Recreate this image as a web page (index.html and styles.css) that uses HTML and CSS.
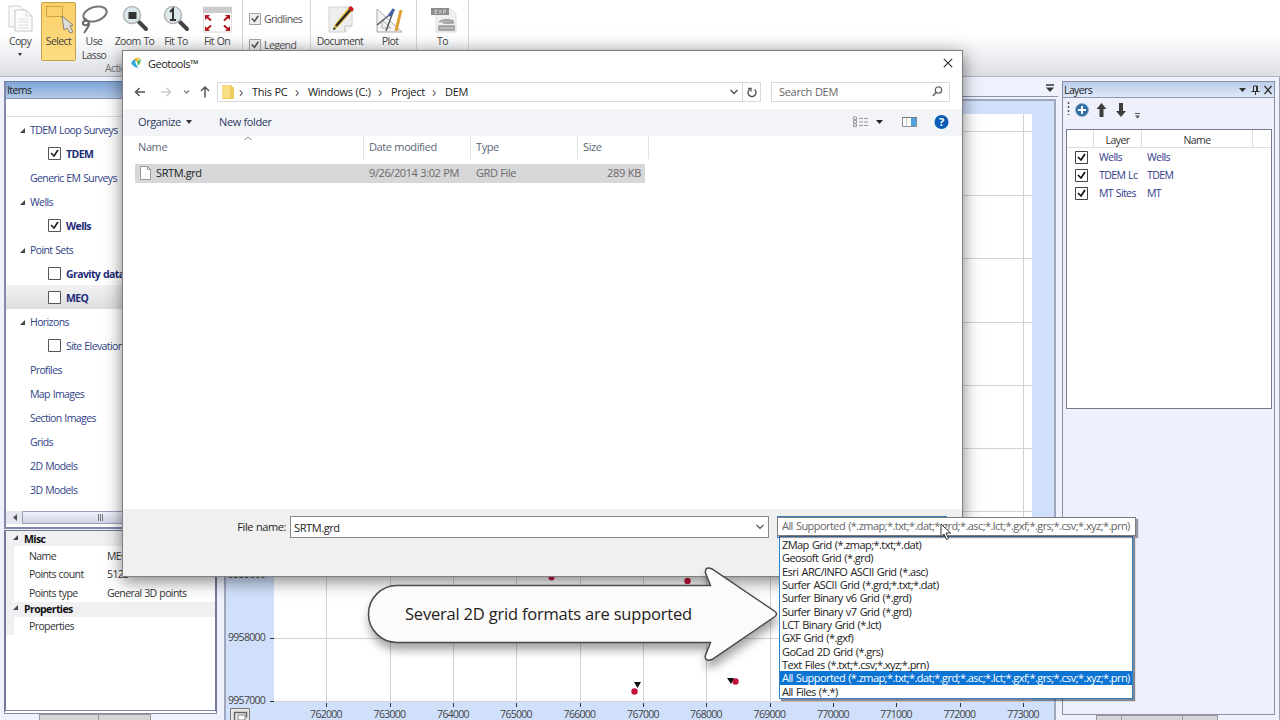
FILE: index.html
```html
<!DOCTYPE html>
<html lang="en">
<head>
  <meta charset="UTF-8">
  <meta name="viewport" content="width=device-width, initial-scale=1.0">
  <title>Geotools</title>
  <link rel="stylesheet" href="styles.css">
</head>
<body>
  <div class="app">
    <div class="ribbon">
      <div class="tool copy">
        <svg width="30" height="32" viewBox="0 0 30 32"><path d="M4 4h11l5 5v16H4z" fill="#fafafa" stroke="#d0d0d0"/><path d="M10 8h11l6 6v15H10z" fill="#fdfdfd" stroke="#c6c6c6"/><path d="M21 8v6h6M13 17h11M13 20h11M13 23h11M13 26h11" fill="none" stroke="#dadada"/></svg>
        <span>Copy</span><i class="caret"></i>
      </div>
      <div class="tool select">
        <svg width="30" height="32" viewBox="0 0 30 32"><path d="M2.500 3.500h16v10h-16z" fill="none" stroke="#b8912f" stroke-dasharray="2 1"/><path d="M18 13l2 14 3-2 3 5 3-1-3-6 3-1z" fill="#ddd" stroke="#8a826c"/></svg>
        <span>Select</span>
      </div>
      <div class="tool lasso">
        <svg width="30" height="32" viewBox="0 0 30 32"><ellipse cx="16" cy="12" rx="12" ry="7" transform="rotate(-17 16 12)" fill="none" stroke="#777" stroke-width="2"/><path d="M5 16q6 4 5 7-2 4-5 8M10 19q-7-1-6 3 3 3 6-1" fill="none" stroke="#6d6d6d" stroke-width="2"/></svg>
        <span>Use<br>Lasso</span>
      </div>
      <div class="tool zoomto">
        <svg width="30" height="32" viewBox="0 0 30 32"><path d="M19 20l7 7" stroke="#444" stroke-width="4" stroke-linecap="round"/><circle cx="12" cy="13" r="8.500" fill="#dce9ec" stroke="#b5b5b5" stroke-width="1.500"/><path d="M8.500 10h8v7h-8z" fill="#333"/></svg>
        <span>Zoom To</span>
      </div>
      <div class="tool fitto">
        <svg width="30" height="32" viewBox="0 0 30 32"><path d="M19 20l7 7" stroke="#444" stroke-width="4" stroke-linecap="round"/><circle cx="12" cy="13" r="8.500" fill="#dce9ec" stroke="#b5b5b5" stroke-width="1.500"/><path d="M9 10l3-3v11M9 18h6" fill="none" stroke="#333" stroke-width="2"/></svg>
        <span>Fit To</span>
      </div>
      <div class="tool fiton">
        <svg width="30" height="32" viewBox="0 0 30 32"><path d="M1.500 5h28v25h-28z" fill="#fff" stroke="#ddd"/><path d="M1 5h29v6H1z" fill="#ccc"/><path d="M4 14l5 4.500M27 14l-5 4.500M4 28l5-4.500M27 28l-5-4.500" stroke="#b3161c" stroke-width="2"/><path d="M3 13h5l-5 5zM28 13h-5l5 5zM3 29h5l-5-5zM28 29h-5l5-5z" fill="#b3161c"/></svg>
        <span>Fit On</span>
      </div>
      <div class="checks">
        <label><svg class="cb" viewBox="0 0 13 13"><path d="M.5.5h12v12H.5z" fill="#eee" stroke="#999"/><path d="M3 6l3 3 4-6" fill="none" stroke="#555" stroke-width="1.700"/></svg>Gridlines</label>
        <label><svg class="cb" viewBox="0 0 13 13"><path d="M.5.5h12v12H.5z" fill="#eee" stroke="#999"/><path d="M3 6l3 3 4-6" fill="none" stroke="#555" stroke-width="1.700"/></svg>Legend</label>
      </div>
      <div class="tool document">
        <svg width="30" height="32" viewBox="0 0 30 32"><path d="M4 5h23v19l-7 6H4z" fill="#eee" stroke="#d2d2d2"/><path d="M20 30v-6h7" fill="#fafafa" stroke="#bbb"/><path d="M8 28l2-6L24 5l4 3-15 17z" fill="#e4c13e"/><path d="M11 24L26 7" stroke="#2c2a22" stroke-width="2.500"/><path d="M23 6l3-2 3 3-2 3z" fill="#c8202a"/><path d="M8 28l1-3 2 2z" fill="#222"/></svg>
        <span>Document</span>
      </div>
      <div class="tool plot">
        <svg width="30" height="32" viewBox="0 0 30 32"><path d="M2 7v23h25zM7 18v8h9z" fill="#f4f4f4" stroke="#aaa"/><path d="M18 10L2 23M18 10L11 29" stroke="#555b66" stroke-width="1.500"/><path d="M14 14l5-7" stroke="#3f5fa8" stroke-width="3"/><path d="M26 8l-5 21" stroke="#dfa033" stroke-width="3"/></svg>
        <span>Plot</span>
      </div>
      <div class="tool to">
        <svg width="30" height="32" viewBox="0 0 30 32"><path d="M8 7h15l5 5v18H8z" fill="#f0f0f0" stroke="#ddd"/><path d="M3 6h18v7H3z" fill="#8c8c8c"/><path d="M9.500 8H7v3.500h2.500M7 9.700h2M11 8l2.500 3.500M13.500 8L11 11.500M15.500 12V8h2v2h-2" fill="none" stroke="#d5d5d5" stroke-width=".8"/><path d="M11 20q4-4 14-1v2H15M11 24h15v4H11z" fill="#bbb" stroke="#999" stroke-width="1.500"/></svg>
        <span>To</span>
      </div>
      <span class="group-name">Actions</span>
    </div>

    <div class="workspace">
      <div class="left">
        <div class="items">
          <div class="panel-head">Items</div>
          <ul class="tree">
            <li class="open">TDEM Loop Surveys</li>
            <li class="leaf bold"><svg class="cb" viewBox="0 0 13 13"><path d="M.5.5h12v12H.5z" fill="#fff" stroke="#555"/><path d="M3 6l3 3 4-6" fill="none" stroke="#222" stroke-width="1.700"/></svg>TDEM</li>
            <li>Generic EM Surveys</li>
            <li class="open">Wells</li>
            <li class="leaf bold"><svg class="cb" viewBox="0 0 13 13"><path d="M.5.5h12v12H.5z" fill="#fff" stroke="#555"/><path d="M3 6l3 3 4-6" fill="none" stroke="#222" stroke-width="1.700"/></svg>Wells</li>
            <li class="open">Point Sets</li>
            <li class="leaf bold"><svg class="cb" viewBox="0 0 13 13"><path d="M.5.5h12v12H.5z" fill="#fff" stroke="#555"/></svg>Gravity data</li>
            <li class="leaf bold current"><svg class="cb" viewBox="0 0 13 13"><path d="M.5.5h12v12H.5z" fill="#fff" stroke="#555"/></svg>MEQ</li>
            <li class="open">Horizons</li>
            <li class="leaf"><svg class="cb" viewBox="0 0 13 13"><path d="M.5.5h12v12H.5z" fill="#fff" stroke="#555"/></svg>Site Elevations</li>
            <li>Profiles</li>
            <li>Map Images</li>
            <li>Section Images</li>
            <li>Grids</li>
            <li>2D Models</li>
            <li>3D Models</li>
          </ul>
          <div class="scrollbar"><svg width="16" height="13" viewBox="0 0 16 13"><path d="M11 3v7L7 6.500z" fill="#555"/></svg><div class="thumb"><i></i><i></i><i></i></div></div>
        </div>
        <div class="props">
          <div class="props-head">Misc</div>
          <div class="prop"><span>Name</span><span>MEQ</span></div>
          <div class="prop"><span>Points count</span><span>5123</span></div>
          <div class="prop"><span>Points type</span><span>General 3D points</span></div>
          <div class="props-head">Properties</div>
          <div class="prop"><span>Properties</span></div>
        </div>
        <div class="tabs"><i></i><i></i></div>
      </div>

      <div class="center">
        <div class="doc-tabs"><svg width="10" height="8" viewBox="0 0 10 8"><path d="M1 1h8" stroke="#333" stroke-width="1.500"/><path d="M1 3.500h8L5 8z" fill="#333"/></svg></div>
        <div class="doc">
          <svg class="map" viewBox="226 101 829 619" width="829" height="619">
            <rect x="274" y="114" width="758" height="587" fill="#fff"/>
            <path class="grid" d="M326.500 114v587M390.500 114v587M453.500 114v587M516.500 114v587M580.500 114v587M643.500 114v587M706.500 114v587M770.500 114v587M833.500 114v587M896.500 114v587M960.500 114v587M1023.500 114v587M274 131.500h758M274 195.500h758M274 258.500h758M274 322.500h758M274 385.500h758M274 448.500h758M274 511.500h758M274 574.500h758M274 638.500h758M274 701.500h758"/>
            <path class="tick" d="M326.500 703v4M390.500 703v4M453.500 703v4M516.500 703v4M580.500 703v4M643.500 703v4M706.500 703v4M770.500 703v4M833.500 703v4M896.500 703v4M960.500 703v4M1023.500 703v4M270 574.500h4M270 638.500h4M270 701.500h4"/>
            <g class="axis">
              <text x="228" y="578">9959000</text>
              <text x="228" y="641">9958000</text>
              <text x="228" y="704">9957000</text>
            </g>
            <g class="axis mid">
              <text x="326" y="718">762000</text>
              <text x="389.500" y="718">763000</text>
              <text x="453" y="718">764000</text>
              <text x="516" y="718">765000</text>
              <text x="579.500" y="718">766000</text>
              <text x="643" y="718">767000</text>
              <text x="706" y="718">768000</text>
              <text x="769.500" y="718">769000</text>
              <text x="833" y="718">770000</text>
              <text x="896" y="718">771000</text>
              <text x="959.500" y="718">772000</text>
              <text x="1023" y="718">773000</text>
            </g>
            <g fill="#c4123f"><circle cx="551.500" cy="577.500" r="3"/><circle cx="687.500" cy="581" r="3.200"/><circle cx="634.500" cy="691.500" r="3.200"/><circle cx="735.500" cy="681.500" r="3.200"/></g>
            <path d="M634 682h7l-3.500 6zM727 678h7l-3 6z" fill="#111"/>
            <path d="M230.500 708.500h19v14h-19z" fill="#e8e8e8" stroke="#777"/><path d="M234.500 720v-7.500h12v5" fill="none" stroke="#666" stroke-width="1.500"/><path d="M238 715h7v5h-7z" fill="#fff" stroke="#888"/>
          </svg>
        </div>
      </div>

      <div class="right">
        <div class="layers">
          <div class="panel-head light"><span>Layers</span>
            <svg width="34" height="12" viewBox="0 0 34 12"><path d="M1 4h7L4.500 8z" fill="#333"/><path d="M15.500 7V2h4v5M13.500 7.500h8M17.500 8v3M18.500 2v5" fill="none" stroke="#333"/><path d="M26.500 2l7 8M33.500 2l-7 8" stroke="#333" stroke-width="1.300"/></svg>
          </div>
          <div class="layer-tools">
            <svg width="74" height="22" viewBox="0 0 74 22"><path d="M2.500 3v13" stroke="#555" stroke-width="1.500" stroke-dasharray="2 2"/><circle cx="16" cy="11" r="6.500" fill="#2f6ea5" stroke="#8fb2cf"/><path d="M16 7v8M12 11h8" stroke="#fff" stroke-width="2"/><path d="M35.500 4l5 6h-3v8h-4v-8h-3zM55 18l5-6h-3V4h-4v8h-3z" fill="#3f3f3f"/><path d="M69 14.500h5" stroke="#555"/><path d="M69 16.500h5l-2.500 3z" fill="#555"/></svg>
          </div>
          <div class="layer-table">
            <div class="lrow lhead"><span></span><span>Layer</span><span>Name</span><span></span></div>
            <div class="lrow"><svg class="cb" viewBox="0 0 13 13"><path d="M.5.5h12v12H.5z" fill="#fff" stroke="#444"/><path d="M3 6l3 3 4-6" fill="none" stroke="#111" stroke-width="1.700"/></svg><span>Wells</span><span>Wells</span></div>
            <div class="lrow"><svg class="cb" viewBox="0 0 13 13"><path d="M.5.5h12v12H.5z" fill="#fff" stroke="#444"/><path d="M3 6l3 3 4-6" fill="none" stroke="#111" stroke-width="1.700"/></svg><span>TDEM Lc</span><span>TDEM</span></div>
            <div class="lrow"><svg class="cb" viewBox="0 0 13 13"><path d="M.5.5h12v12H.5z" fill="#fff" stroke="#444"/><path d="M3 6l3 3 4-6" fill="none" stroke="#111" stroke-width="1.700"/></svg><span>MT Sites</span><span>MT</span></div>
          </div>
        </div>
        <div class="tabs right-tabs"><i></i><i></i><i></i></div>
      </div>
    </div>
  </div>

  <div class="dialog">
    <div class="title">
      <svg width="14" height="14" viewBox="0 0 14 14"><path d="M1 7q3-5 8-5L5 6l3 6Q3 11 1 7z" fill="#35a6d8"/><path d="M4 3q3-2 7-1-4 1-4 4z" fill="#f0b429"/><path d="M7 5l4-2q0 4-3 7z" fill="#5fb75a"/></svg>
      <span>Geotools™</span>
      <svg class="close" width="10" height="10" viewBox="0 0 10 10"><path d="M.8.800l8.400 8.400M9.200.800L.8 9.200" stroke="#333" stroke-width="1.200"/></svg>
    </div>
    <div class="nav">
      <svg width="76" height="14" viewBox="0 0 76 14" fill="none" stroke-width="1.500"><path d="M11 7H1.500M5.500 3l-4 4 4 4" stroke="#555"/><path d="M27 7h9.500M32.500 3l4 4-4 4" stroke="#ccc"/><path d="M50 5.500l2.500 2.500L55 5.500" stroke="#888"/><path d="M71 12.500V2M67 6l4-4 4 4" stroke="#555"/></svg>
      <div class="path">
        <svg width="12" height="14" viewBox="0 0 12 14"><path d="M0 0h10v1.500l2 1V14H0z" fill="#eecb5f"/><path d="M0 0h8v13H0z" fill="#f9dd82"/></svg>
        <b>›</b><span class="c1">This PC</span><b>›</b><span class="c2">Windows (C:)</span><b>›</b><span class="c3">Project</span><b>›</b><span>DEM</span>
        <svg class="down" width="10" height="8" viewBox="0 0 10 8"><path d="M1.500 2L5 5.500 8.500 2" fill="none" stroke="#555" stroke-width="1.500"/></svg>
        <div class="refresh"><svg width="11" height="12" viewBox="0 0 11 12"><path d="M8.500 3.500a4 4 0 1 1-5 0M2 2.500h3v3" fill="none" stroke="#555" stroke-width="1.400"/></svg></div>
      </div>
      <div class="search"><span>Search DEM</span><svg width="11" height="11" viewBox="0 0 11 11"><circle cx="6.500" cy="4" r="3.200" fill="none" stroke="#666" stroke-width="1.300"/><path d="M4.300 6.300L.8 10" stroke="#666" stroke-width="1.600"/></svg></div>
    </div>
    <div class="toolbar">
      <span class="organize">Organize</span><i class="caret"></i><span class="newfolder">New folder</span>
      <svg width="98" height="16" viewBox="0 0 98 16"><path d="M1.500 3h3v2.500h-3zM1.500 6.500h3V9h-3zM1.500 10h3v2.500h-3z" fill="none" stroke="#999"/><path d="M7 4.500h9M7 8h9M7 11.500h9" stroke="#999" stroke-dasharray="4 1"/><path d="M24 6h7l-3.500 4z" fill="#223"/><path d="M50.500 3.500h14v9h-14z" fill="#fff" stroke="#8a8f99"/><path d="M59 4h5v8h-5z" fill="#4da3e0"/><path d="M54.500 4v8" stroke="#ccc"/><path d="M50 3.500h15" stroke="#777"/><circle cx="89.500" cy="8" r="7" fill="#0b5cb5"/><text x="89.500" y="12" class="help">?</text></svg>
    </div>
    <div class="list">
      <svg class="sort" width="8" height="5" viewBox="0 0 8 5"><path d="M.5 4L4 1l3.500 3" fill="none" stroke="#888"/></svg>
      <div class="lh"><span>Name</span><span>Date modified</span><span>Type</span><span>Size</span></div>
      <div class="file">
        <span><svg width="11" height="14" viewBox="0 0 11 14"><path d="M.5.500h7l3 3v10H.5z" fill="#fff" stroke="#999"/><path d="M7.500.500v3h3" fill="none" stroke="#999"/></svg>SRTM.grd</span>
        <span>9/26/2014 3:02 PM</span><span>GRD File</span><span>289 KB</span>
      </div>
    </div>
    <div class="footer">
      <span>File name:</span>
      <div class="filename">SRTM.grd<svg width="10" height="8" viewBox="0 0 10 8"><path d="M1.500 2L5 5.500 8.500 2" fill="none" stroke="#555" stroke-width="1.200"/></svg></div>
      <div class="combo"></div>
    </div>
  </div>

  <svg class="callout" width="430" height="120" viewBox="360 556 430 120">
    <path d="M397 585.500H710.500L705.500 573Q704.500 566 712 569L775 611.500Q778 614 775 616.500L712 659.500Q704 662 705.500 655L710.500 642.500H397A28.500 28.500 0 0 1 397 585.500Z" fill="#fdfafa" stroke="#4a4a4a" stroke-width="1.500"/>
    <text x="405" y="620">Several 2D grid formats are supported</text>
  </svg>

  <div class="formats">
    <div>ZMap Grid (*.zmap;*.txt;*.dat)</div>
    <div>Geosoft Grid (*.grd)</div>
    <div>Esri ARC/INFO ASCII Grid (*.asc)</div>
    <div>Surfer ASCII Grid (*.grd;*.txt;*.dat)</div>
    <div>Surfer Binary v6 Grid (*.grd)</div>
    <div>Surfer Binary v7 Grid (*.grd)</div>
    <div>LCT Binary Grid (*.lct)</div>
    <div>GXF Grid (*.gxf)</div>
    <div>GoCad 2D Grid (*.grs)</div>
    <div>Text Files (*.txt;*.csv;*.xyz;*.prn)</div>
    <div class="on">All Supported (*.zmap;*.txt;*.dat;*.grd;*.asc;*.lct;*.gxf;*.grs;*.csv;*.xyz;*.prn)</div>
    <div>All Files (*.*)</div>
  </div>
  <div class="tooltip">All Supported (*.zmap;*.txt;*.dat;*.grd;*.asc;*.lct;*.gxf;*.grs;*.csv;*.xyz;*.prn)</div>
  <svg class="cursor" width="12" height="18" viewBox="0 0 12 18"><path d="M1 1v13l3-3 2.500 5.500 2-1L6 10h4.500z" fill="#fff" stroke="#333"/></svg>
</body>
</html>
```
FILE: styles.css
```css
* {
  box-sizing: border-box;
}

body {
  margin: 0;
  width: 1280px;
  height: 720px;
  overflow: hidden;
  position: relative;
  font-family: 'Open Sans', 'Noto Sans', sans-serif;
  font-size: 10.5px;
  letter-spacing: -0.6px;
  word-spacing: 0.6px;
  color: #333;
  white-space: nowrap;
}

svg {
  display: block;
  flex: none;
}

.app {
  display: flex;
  flex-direction: column;
  height: 720px;
  background: #eff2fd;
}

.cb {
  width: 13px;
  height: 13px;
}

.caret {
  width: 0;
  border: 3.5px solid transparent;
  border-top: 4px solid #333;
  border-bottom: 0;
}

/* ribbon */
.ribbon {
  position: relative;
  display: flex;
  height: 77px;
  flex: none;
  background: linear-gradient(#fff 45%, #f3f4f6 65%, #dcdee4);
  border-bottom: 1px solid #b3b6bd;
}

.tool {
  display: flex;
  flex-direction: column;
  align-items: center;
  padding-top: 2px;
  height: 76px;
  text-align: center;
  line-height: 14px;
  color: #444;
}

.copy { width: 41px; padding-right: 1px; }
.copy .caret { margin-top: 5px; border-width: 3px 2.5px 0; }
.select {
  width: 35px;
  height: 59px;
  margin-top: 2px;
  padding-top: 0;
  background: linear-gradient(#fbcf69, #fddd84);
  border: 1px solid #c9a04a;
  border-radius: 2px;
}
.select span { margin-top: -1px; }
.lasso { width: 36px; }
.zoomto { width: 45px; }
.fitto { width: 38px; }
.fiton { width: 47px; padding-right: 3px; }
.document { width: 58px; }
.plot { width: 47px; padding-right: 5px; }
.to { width: 53px; border-left: 1px solid #d5d5d5; border-right: 1px solid #d5d5d5; }

.checks {
  width: 69px;
  border: 1px solid #d5d5d5;
  border-width: 0 1px;
  padding: 12px 0 0 6px;
}

.checks label {
  display: flex;
  align-items: center;
  gap: 3px;
  height: 14px;
  margin-bottom: 12px;
  color: #555;
}

.checks .cb {
  width: 12px;
  height: 12px;
}

.group-name {
  position: absolute;
  left: 105px;
  top: 61px;
  color: #777;
}

/* workspace */
.workspace {
  flex: 1;
  display: flex;
}

.left {
  width: 220px;
  padding: 4px 3px 0 4px;
  display: flex;
  flex-direction: column;
}

.items {
  height: 448px;
  border: 2px solid #8289a8;
  border-top: 1px solid #6a7fa8;
  background: #fff;
}

.panel-head {
  height: 17px;
  line-height: 16px;
  padding-left: 1px;
  color: #222;
  background: linear-gradient(#7fa5d6, #b2c9e8);
  border-bottom: 1px solid #8a98b5;
}

.tree {
  list-style: none;
  margin: 17px 0 0;
  padding: 0;
  height: 395px;
  border-top: 1px solid #ddd;
  color: #2f3f86;
}

.tree li {
  display: flex;
  align-items: center;
  height: 24px;
  padding: 1px 0 0 24px;
}

.tree li.open {
  padding-left: 14px;
}

.tree li.open::before {
  content: "";
  width: 0;
  border-left: 5px solid transparent;
  border-bottom: 5px solid #444;
  margin: 1px 5px 0 0;
}

.tree li.leaf {
  padding-left: 42px;
  gap: 5px;
}

.tree li.bold {
  font-weight: 700;
  color: #1c2c78;
}

.tree li.current {
  background: linear-gradient(#f2f2f2, #dedede);
}

.scrollbar {
  display: flex;
  height: 13px;
  background: #e6e6f0;
}

.thumb {
  flex: 1;
  display: flex;
  justify-content: center;
  align-items: center;
  gap: 1px;
  padding-right: 37px;
  background: linear-gradient(#f0f2fa, #cfd4e6);
  border: 1px solid #9a9fb5;
}

.thumb i {
  width: 1px;
  height: 7px;
  background: #777;
}

.props {
  margin-top: 1px;
  height: 184px;
  background: #fff;
  border: 2px solid #737997;
  border-top-width: 1px;
  border-bottom: 4px double #8289a8;
}

.props-head {
  display: flex;
  align-items: center;
  height: 15px;
  padding-left: 7px;
  background: #f0f0f2;
  font-weight: 700;
  color: #111;
}

.props-head::before {
  content: "";
  width: 0;
  border-left: 5px solid transparent;
  border-bottom: 5px solid #445;
  margin: -3px 6px 0 0;
}

.prop {
  display: flex;
  align-items: center;
  height: 18.5px;
  padding: 1px 0 0 15px;
  border-left: 8px solid #f0f0f2;
}

.prop span:first-child {
  width: 78px;
}

.tabs {
  display: flex;
  height: 6px;
  margin-left: 35px;
}

.tabs i {
  width: 60px;
  background: #d5d5d8;
  border: 1px solid #999;
  border-bottom: 0;
}

.tabs i + i {
  width: 52px;
  border-left: 0;
}

.center {
  width: 838px;
  display: flex;
  flex-direction: column;
}

.doc-tabs {
  height: 20px;
  display: flex;
  justify-content: flex-end;
  padding: 7px 3px 0 0;
  border-bottom: 1px solid #8a93b3;
}

.doc {
  border: 2px solid #a0a7bd;
  border-width: 2px 2px 0;
  margin: 2px 2px 0 4px;
  background: #d0e0fb;
}

.grid { stroke: #d2d2d2; }
.tick { stroke: #333; }
.axis { font-size: 10.5px; fill: #444; letter-spacing: -0.7px; }
.mid { text-anchor: middle; }

.right {
  width: 222px;
  padding: 4px 4px 0;
  border-right: 1px solid #9da3b5;
}

.layers {
  height: 634px;
  border: 1px solid #8a90aa;
  background: #eef0fc;
}

.panel-head.light {
  display: flex;
  justify-content: space-between;
  align-items: center;
  height: 16px;
  padding-right: 2px;
  background: linear-gradient(#bccde9, #dde7f7);
}

.layer-tools {
  height: 31px;
  padding: 1px 0 0 3px;
}

.layer-table {
  margin: 0 2px 0 3px;
  height: 280px;
  background: #fff;
  border: 1px solid #747a90;
  color: #2f3a8a;
}

.lrow {
  display: grid;
  grid-template-columns: 27px 48px 111px 1fr;
  align-items: center;
  height: 18px;
}

.lrow .cb {
  margin-left: 8px;
}

.lrow:not(.lhead) span {
  padding-left: 5px;
}

.lhead {
  color: #333;
  text-align: center;
  border-bottom: 1px solid #ddd;
}

.lhead span {
  height: 17px;
  line-height: 20px;
  border-right: 1px solid #ddd;
}

.lhead span:last-child {
  border-right: 0;
}

.right-tabs {
  margin-left: 34px;
}

.right-tabs i {
  width: 26px;
}

.right-tabs i + i {
  width: 61px;
}

.right-tabs i + i + i {
  width: 35px;
}

/* open dialog */
.dialog {
  position: absolute;
  left: 122px;
  top: 50px;
  width: 841px;
  height: 527px;
  display: flex;
  flex-direction: column;
  background: #fff;
  border: 1px solid #808080;
  box-shadow: 0 4px 16px rgba(0, 0, 0, 0.5);
  font-size: 11px;
  letter-spacing: -0.4px;
  word-spacing: 0.3px;
  color: #222;
}

.title {
  display: flex;
  align-items: center;
  height: 25px;
  padding: 0 9px 1px 7px;
}

.title span {
  flex: 1;
  padding-left: 4px;
  letter-spacing: -0.5px;
}

.nav {
  display: flex;
  align-items: center;
  height: 33px;
  padding: 0 12px 1px 11px;
  letter-spacing: -0.3px;
}

.path {
  display: flex;
  align-items: center;
  width: 544px;
  height: 20px;
  margin-left: 7px;
  padding: 0 0 1px 4px;
  border: 1px solid #d9d9d9;
}

.path b {
  width: 21px;
  padding-left: 8px;
  font-weight: 400;
  font-size: 14px;
  line-height: 16px;
  color: #555;
}

.path svg + b { width: 18px; padding-left: 5px; }
.c1 { width: 35px; }
.c2 { width: 62px; }
.c3 { width: 33px; }

.down {
  margin-left: auto;
  margin-right: 3px;
}

.refresh {
  height: 18px;
  width: 18px;
  margin-bottom: -1px;
  padding: 3px;
  border-left: 1px solid #d9d9d9;
}

.search {
  flex: 1;
  display: flex;
  align-items: center;
  justify-content: space-between;
  height: 20px;
  margin-left: 10px;
  padding: 0 6px 1px 7px;
  border: 1px solid #d9d9d9;
  color: #666;
}

.toolbar {
  display: flex;
  align-items: center;
  height: 27px;
  padding: 0 12px 2px 15px;
  background: #f3f4f8;
  color: #2b3a5e;
}

.organize { width: 44px; }
.toolbar .caret { margin-left: 4px; }
.newfolder { margin-left: 27px; flex: 1; }
.help { font-size: 11px; font-weight: 700; fill: #fff; text-anchor: middle; letter-spacing: 0; }

.list {
  position: relative;
  flex: 1;
  padding-left: 12px;
}

.sort {
  position: absolute;
  left: 121px;
  top: 0;
}

.lh, .file {
  display: grid;
  align-items: center;
  grid-template-columns: 229px 107px 107px 71px;
}

.lh {
  height: 23px;
  color: #5d6675;
}

.lh span {
  height: 23px;
  line-height: 22px;
  padding-left: 5px;
  border-right: 1px solid #e2e2e2;
}

.lh span:first-child {
  padding-left: 3px;
}

.file {
  width: 510px;
  height: 19px;
  margin-top: 5px;
  padding-bottom: 2px;
  background: #d6d7d9;
  grid-template-columns: 229px 107px 107px 67px;
  color: #6d6868;
}

.file span {
  padding-left: 5px;
}

.file span:first-child {
  display: flex;
  align-items: center;
  gap: 5px;
  color: #222;
}

.file span:last-child {
  text-align: right;
  padding-right: 4px;
  letter-spacing: -0.3px;
}

.footer {
  height: 67px;
  display: flex;
  align-items: flex-start;
  padding-top: 7px;
  background: #f0f0f0;
}

.footer > span {
  width: 167px;
  padding: 3px 4px 0 0;
  text-align: right;
}

.filename {
  display: flex;
  align-items: center;
  justify-content: space-between;
  width: 479px;
  height: 22px;
  padding: 0 3px 0 3px;
  background: #fff;
  border: 1px solid #8a8a8a;
}

.combo {
  width: 170px;
  height: 22px;
  margin-left: 8px;
  border: 1px solid #3a7ab8;
}

/* annotation */
.callout {
  position: absolute;
  left: 360px;
  top: 556px;
  overflow: visible;
}

.callout path {
  filter: drop-shadow(1px 7px 5px rgba(0, 0, 0, 0.35));
}

.callout text {
  font-size: 16.5px;
  letter-spacing: -0.2px;
  word-spacing: 0;
  fill: #222;
}

.formats {
  position: absolute;
  left: 779px;
  top: 536px;
  width: 354px;
  height: 163px;
  padding-top: 1px;
  background: #fff;
  border: 1px solid #2f7fc4;
  box-shadow: 2px 2px 1px rgba(60, 60, 70, 0.6);
  font-size: 11px;
  letter-spacing: -0.56px;
  word-spacing: 0.8px;
  color: #222;
}

.formats div {
  height: 13.33px;
  line-height: 13px;
  padding-left: 2px;
}

.formats .on {
  background: #0c74d2;
  color: #fff;
}

.tooltip {
  position: absolute;
  left: 777px;
  top: 517px;
  width: 359px;
  height: 19px;
  line-height: 16px;
  padding-left: 4px;
  background: #fff;
  border: 1px solid #7c7c7c;
  box-shadow: 2px 2px 1px rgba(60, 60, 70, 0.5);
  font-size: 11px;
  letter-spacing: -0.56px;
  word-spacing: 0.8px;
  color: #666;
}

.cursor {
  position: absolute;
  left: 940px;
  top: 523px;
}
```
